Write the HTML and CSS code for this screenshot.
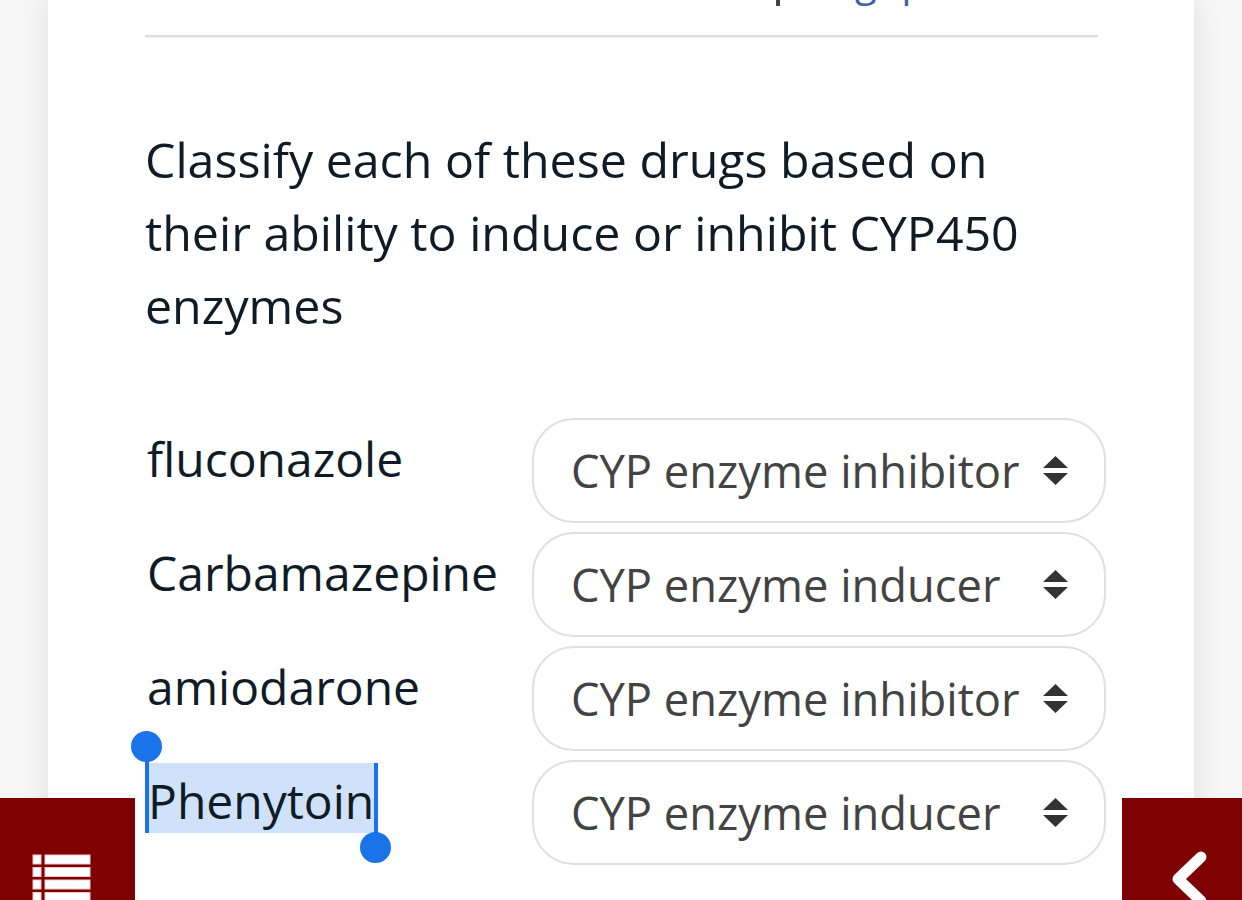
FILE: index.html
```html
<!DOCTYPE html>
<html lang="en">
<head>
<meta charset="utf-8">
<title>Question</title>
<link rel="stylesheet" href="styles.css">
</head>
<body>
<div class="card">
  <div class="qinfo">
    <a class="flag"><svg class="flag-icon" width="14" height="50" viewBox="0 0 14 50"><rect x="2" y="0" width="4" height="50" fill="#444"/></svg><span>Flag question</span></a>
  </div>
  <hr class="rule">
  <p class="qtext">Classify each of these drugs based on their ability to induce or inhibit CYP450 enzymes</p>
  <div class="answers">
    <div class="label">fluconazole</div>
    <div class="select"><span>CYP enzyme inhibitor</span><svg class="arrows" width="25" height="29" viewBox="0 0 25 29"><polygon points="12.5,0 25,12 0,12" fill="#333"/><polygon points="0,17 25,17 12.5,29" fill="#333"/></svg></div>
    <div class="label">Carbamazepine</div>
    <div class="select"><span>CYP enzyme inducer</span><svg class="arrows" width="25" height="29" viewBox="0 0 25 29"><polygon points="12.5,0 25,12 0,12" fill="#333"/><polygon points="0,17 25,17 12.5,29" fill="#333"/></svg></div>
    <div class="label">amiodarone</div>
    <div class="select"><span>CYP enzyme inhibitor</span><svg class="arrows" width="25" height="29" viewBox="0 0 25 29"><polygon points="12.5,0 25,12 0,12" fill="#333"/><polygon points="0,17 25,17 12.5,29" fill="#333"/></svg></div>
    <div class="label"><span class="selected">Phenytoin<i class="handle start"></i><i class="handle end"></i></span></div>
    <div class="select"><span>CYP enzyme inducer</span><svg class="arrows" width="25" height="29" viewBox="0 0 25 29"><polygon points="12.5,0 25,12 0,12" fill="#333"/><polygon points="0,17 25,17 12.5,29" fill="#333"/></svg></div>
  </div>
</div>
<div class="navbtn nav-left">
  <svg width="135" height="102" viewBox="0 0 135 102">
    <g fill="#fff" stroke="#f2c9c9" stroke-width="1">
      <rect x="33" y="57" width="8" height="9"/><rect x="45" y="57" width="45" height="9"/>
      <rect x="33" y="69.5" width="8" height="9"/><rect x="45" y="69.5" width="45" height="9"/>
      <rect x="33" y="82" width="8" height="9"/><rect x="45" y="82" width="45" height="9"/>
      <rect x="33" y="94.5" width="8" height="9"/><rect x="45" y="94.5" width="45" height="9"/>
    </g>
  </svg>
</div>
<div class="navbtn nav-right">
  <svg width="120" height="102" viewBox="0 0 120 102">
    <polyline points="79,59 56,81 79,103" fill="none" stroke="#fff" stroke-width="11" stroke-linecap="round" stroke-linejoin="round"/>
  </svg>
</div>
</body>
</html>
```

FILE: styles.css
```css
html, body {
  margin: 0;
  height: 100%;
  overflow: hidden;
}
body {
  background: #f7f7f7;
  font-family: "Open Sans", "DejaVu Sans", sans-serif;
}
.card {
  margin: 0 48px;
  min-height: 900px;
  background: #fff;
  box-shadow: 0 0 30px rgba(0, 0, 0, 0.11);
  padding: 0 96px 0 97px;
  box-sizing: border-box;
}
.qinfo {
  height: 35px;
  display: flex;
  padding-left: 629px;
}
.flag {
  display: flex;
  align-items: flex-start;
  gap: 14px;
  margin-top: -39px;
  font-size: 40px;
  line-height: 40px;
  color: #3b62ad;
  white-space: nowrap;
}
.flag-icon {
  margin-top: -5px;
}
.rule {
  margin: 0;
  border: 0;
  border-top: 2px solid #dcdcdc;
  box-shadow: 0 1px 1px rgba(0, 0, 0, 0.07);
  height: 0;
}
.qtext {
  margin: 86px 0 0;
  max-width: 900px;
  font-size: 48.3px;
  line-height: 73px;
  color: #0f1c27;
}
.answers {
  display: grid;
  grid-template-columns: 387px 574px;
  row-gap: 9px;
  margin: 76px -8px 0 0;
}
.label {
  font-size: 48px;
  line-height: 72px;
  padding: 5px 0 0 2px;
  color: #0f1c27;
}
.select {
  height: 105px;
  box-sizing: border-box;
  border: 2px solid #e0e0e0;
  border-radius: 42px;
  display: flex;
  align-items: center;
  justify-content: space-between;
  padding: 0 36px 0 37px;
  font-size: 45.3px;
  color: #434343;
}
.arrows {
  flex: none;
}
.selected {
  position: relative;
  background: #cfe2f9;
  padding: 5px 1px 0 1px;
}
.handle {
  position: absolute;
  width: 4px;
  background: #1a73e8;
}
.handle::after {
  content: "";
  position: absolute;
  width: 31px;
  height: 31px;
  border-radius: 50%;
  background: #1a73e8;
}
.handle.start {
  left: -2px;
  top: -17px;
  height: 87px;
}
.handle.start::after {
  left: -14px;
  top: -15px;
}
.handle.end {
  right: -3px;
  top: 0;
  height: 85px;
}
.handle.end::after {
  left: -14px;
  top: 69px;
}
.navbtn {
  position: fixed;
  bottom: 0;
  height: 102px;
  background: #7e0000;
}
.navbtn svg {
  display: block;
}
.nav-left {
  left: 0;
  width: 135px;
}
.nav-right {
  right: 0;
  width: 120px;
}
```
